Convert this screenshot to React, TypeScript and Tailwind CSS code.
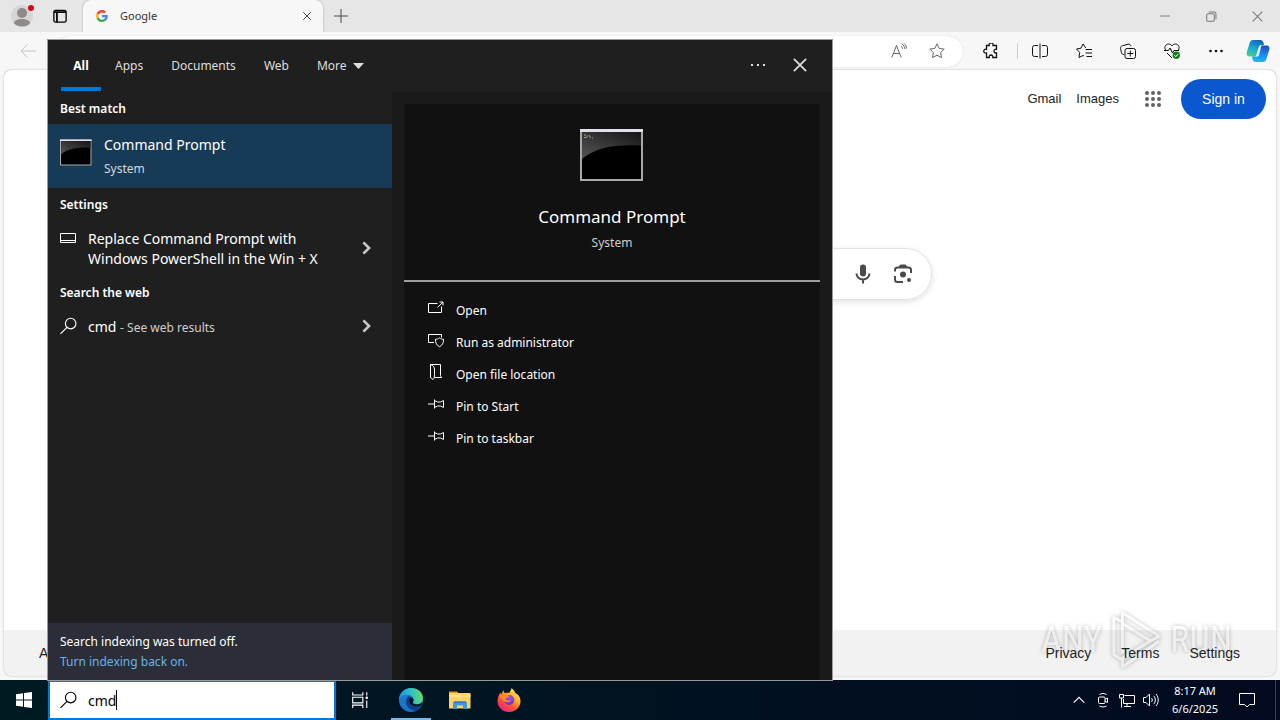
import type { ReactNode } from 'react';

const segoe = "font-['Noto_Sans','Open_Sans',sans-serif]";
const arial = "font-['Liberation_Sans',Arial,sans-serif]";

interface IconProps {
  size?: number;
  className?: string;
  stroke?: number;
  children: ReactNode;
}

function Icon({ size = 16, className = '', stroke = 1, children }: IconProps) {
  return (
    <svg
      width={size}
      height={size}
      viewBox="0 0 16 16"
      fill="none"
      stroke="currentColor"
      strokeWidth={stroke}
      className={`shrink-0 ${className}`}
      aria-hidden="true"
    >
      {children}
    </svg>
  );
}

function GoogleLogo() {
  return (
    <svg width="12" height="12" viewBox="0 0 48 48" className="shrink-0" aria-hidden="true">
      <path fill="#EA4335" d="M24 9.5c3.5 0 6.7 1.2 9.2 3.6l6.9-6.9C35.9 2.4 30.5 0 24 0 14.6 0 6.5 5.4 2.6 13.2l8 6.2C12.4 13.7 17.7 9.5 24 9.5z" />
      <path fill="#4285F4" d="M47 24.6c0-1.6-.2-3.1-.4-4.6H24v9h12.9c-.6 3-2.200 5.500-4.800 7.200l7.700 6C44.400 38 47 32 47 24.600z" />
      <path fill="#FBBC05" d="M10.500 28.600c-.5-1.500-.8-3-.8-4.600s.3-3.100.8-4.600l-8-6.200C.9 16.500 0 20.100 0 24s.9 7.500 2.600 10.800l7.900-6.200z" />
      <path fill="#34A853" d="M24 48c6.500 0 11.900-2.100 15.900-5.800l-7.700-6c-2.200 1.500-4.900 2.300-8.200 2.300-6.300 0-11.600-4.200-13.500-9.900l-8 6.200C6.500 42.600 14.600 48 24 48z" />
    </svg>
  );
}

function CopilotLogo() {
  return (
    <svg width="24" height="24" viewBox="0 0 24 24" aria-hidden="true">
      <defs>
        <linearGradient id="cp-left" x1="0.6" y1="0" x2="0.2" y2="1">
          <stop offset="0" stopColor="#1467b8" />
          <stop offset="0.5" stopColor="#18a9d6" />
          <stop offset="1" stopColor="#4fd08c" />
        </linearGradient>
        <linearGradient id="cp-right" x1="0.6" y1="0" x2="0.4" y2="1">
          <stop offset="0" stopColor="#1b4fc4" />
          <stop offset="0.5" stopColor="#1e84ea" />
          <stop offset="1" stopColor="#27b8f2" />
        </linearGradient>
      </defs>
      <path d="M7.500 1h7c1.600 0 2.400.9 2.900 2.500l.7 2.500h-2.500c-1.500 0-2.300.8-2.800 2.300L10.500 16c-.5 1.500-1.300 1.500-2.500 1.500H3.500C1 17.500 0 15.700.8 13L3.800 3.500C4.400 1.800 5.500 1 7.500 1z" fill="url(#cp-left)" />
      <path d="M16.500 23h-7c-1.600 0-2.400-.9-2.900-2.500L6 17.500h2.400c1.500 0 2.300-.8 2.800-2.300L13.500 8c.5-1.500 1.300-1.500 2.500-1.500h4.500c2.500 0 3.500 1.800 2.700 4.500l-3 9.500c-.6 1.700-1.700 2.500-3.700 2.500z" fill="url(#cp-right)" />
      <path d="M10.600 15.500L13 8.300c.3-.9.700-1.400 1.200-1.800h1.200l-2.200 8.700c-.4 1.500-1.200 2.300-2.600 2.300H9.500c.5-.4.800-1 1.100-2z" fill="#eef7ff" />
    </svg>
  );
}

function EdgeLogo() {
  return (
    <svg width="26" height="26" viewBox="0 0 26 26" aria-hidden="true">
      <defs>
        <linearGradient id="edge-top" x1="0" y1="0.5" x2="1" y2="0.4">
          <stop offset="0" stopColor="#1a8fdc" />
          <stop offset="0.5" stopColor="#2cc0c8" />
          <stop offset="1" stopColor="#68dc60" />
        </linearGradient>
        <linearGradient id="edge-low" x1="0" y1="0" x2="0.6" y2="1">
          <stop offset="0" stopColor="#1b7fd0" />
          <stop offset="1" stopColor="#1a6fc4" />
        </linearGradient>
      </defs>
      <circle cx="13" cy="13" r="12" fill="url(#edge-low)" />
      <path d="M1 13C1 6 6.500 1 13 1c7 0 12 4.600 12 10.200 0 3.800-2.900 6-6.200 6-2.800 0-4.200-1-4.200-1.900 0-.8 1.100-1.200 1.100-3 0-2.400-2.400-4.600-5.700-4.600C5.500 7.700 2 9.500 1 13z" fill="url(#edge-top)" />
      <path d="M10.500 9.600c-3 2.400-3.300 7.200-.6 10.500 1.900 2.400 4.800 3.700 7.900 3.900A12 12 0 0 0 23.600 18.500c-1.300.7-3 1.100-4.900 1.100-4.500 0-7.700-2.600-7.700-6 0-1.600.6-2.700 1.500-3.600-.6-.3-1.300-.4-2-.4z" fill="#123f8c" />
      <path d="M11 13.600c0-1.400.5-2.500 1.300-3.300 1.900.5 3.400 1.500 3.400 3 0 1-.9 1.500-.9 2.200 0 1 1.600 1.900 4 1.900 2.100 0 4.300-.7 5.500-2.600-.2 1.300-.4 2.400-.8 3.500-1.300.9-3 1.300-4.800 1.300-4.500 0-7.700-2.600-7.700-6z" fill="#03161f" />
    </svg>
  );
}

function FolderLogo() {
  return (
    <svg width="24" height="24" viewBox="0 0 24 24" aria-hidden="true">
      <path d="M1 3.500h8l2 2h-10z" fill="#e8981c" />
      <path d="M1 5h21.500v15.500H1z" fill="#fcd364" />
      <path d="M1 7h21.500v2H1z" fill="#ffe08a" />
      <path d="M5 21v-5.500a2 2 0 0 1 2-2h10a2 2 0 0 1 2 2V21h-4v-3.500H9V21z" fill="#3c9be0" />
      <path d="M6 13.500h12v1.500H6z" fill="#2a78bd" />
    </svg>
  );
}

function FirefoxLogo() {
  return (
    <svg width="26" height="26" viewBox="0 0 26 26" aria-hidden="true">
      <defs>
        <linearGradient id="ff-body" x1="0.85" y1="0.05" x2="0.2" y2="0.95">
          <stop offset="0" stopColor="#fff14f" />
          <stop offset="0.35" stopColor="#ffad25" />
          <stop offset="0.65" stopColor="#ff5637" />
          <stop offset="1" stopColor="#e9217c" />
        </linearGradient>
        <radialGradient id="ff-globe" cx="0.6" cy="0.3" r="0.8">
          <stop offset="0" stopColor="#a14bf5" />
          <stop offset="1" stopColor="#5237b8" />
        </radialGradient>
      </defs>
      <path d="M15.500 1c2 1.500 3.300 3.300 3.800 5 2.700 1.200 5.200 4 5.200 8.200C24.500 20.300 19.400 25 13 25S1.500 20.300 1.500 14c0-3.500 1.300-6.500 3-8.600L5 7.500C6 6 6.800 4.700 7.200 3.200l1.600 3.100c1.200-.4 2.800-.6 4.200-.3 1.100-1.200 2.200-2.800 2.500-5z" fill="url(#ff-body)" />
      <circle cx="13.300" cy="13" r="5" fill="url(#ff-globe)" />
      <path d="M4 10c2-3.500 5.500-3 8-1.500l1.200 1.200c-.3 1-2.600.9-3.200 1.800-.4.700.2 1.400 1 1.700 1.600.6 2.300-.4 3.600.1-.4 1.300-2.200 2.200-4 1.900C7.500 14.700 6 12 4 10z" fill="#ff8a2b" />
    </svg>
  );
}

function ConsoleThumb({ large = false }: { large?: boolean }) {
  return (
    <svg width={large ? 64 : 32} height={large ? 54 : 27} viewBox="0 0 64 54" className="shrink-0" aria-hidden="true">
      <defs>
        <linearGradient id="console-shine" x1="0" y1="1" x2="1" y2="0">
          <stop offset="0" stopColor="#555" />
          <stop offset="1" stopColor="#151515" />
        </linearGradient>
      </defs>
      <rect x="0" y="1" width="63" height="52" fill="#a8a8a8" />
      <rect x="0" y="1" width="63" height="3" fill="#e4e0ea" />
      <rect x="2" y="4" width="59" height="47" fill="#000" />
      <path d="M2 4h59v13.500C35 16 14 20 2 31z" fill="url(#console-shine)" />
      {large && <path d="M4 7h2M4 9.500h2M7 7.500v2M9 7l1.500 3M12 10h1" stroke="#bbb" strokeWidth="0.8" />}
    </svg>
  );
}

const SearchGlyph = () => (
  <Icon size={18}>
    <circle cx="9.500" cy="5.800" r="4.700" />
    <path d="M6.200 9.200L.4 15" />
  </Icon>
);

const Pin = () => (
  <Icon>
    <path d="M0 8h6.500M6.500 3.500v9M6.500 4.500l3 1.500h3l3-1.500v7l-3-1.500h-3l-3 1.500" />
  </Icon>
);

const Chevron = () => (
  <Icon size={14} stroke={3} className="text-[#c8c8c8]">
    <path d="M5 1.500L11.500 8 5 14.500" />
  </Icon>
);

const actions = [
  { label: 'Open', icon: <Icon><path d="M9.500 3.500h-9v9h13v-6M9.500 7.500l5.500-5.500M11.500 2h3.500v3.500" /></Icon> },
  { label: 'Run as administrator', icon: <Icon><path d="M6 10.500H.5v-8h13v3M11.500 6c1.200.9 2.500 1.200 4 1.200 0 4-1 6-4 7.500-3-1.500-4-3.500-4-7.500 1.500 0 2.800-.3 4-1.200z" /></Icon> },
  { label: 'Open file location', icon: <Icon><path d="M6.500 13.500h7l-1-2V.5h-10M2.500.5v13l2.500 2c1.500-1 1.500-3 1.500-5V6c0-3-1.500-5-4-5.500z" /></Icon> },
  { label: 'Pin to Start', icon: <Pin /> },
  { label: 'Pin to taskbar', icon: <Pin /> },
];

const toolbar = [
  { label: 'Split screen', icon: <Icon><path d="M6 2.500H2.500a2 2 0 0 0-2 2v7a2 2 0 0 0 2 2H6M8 .5v15M10 2.500h3.500a2 2 0 0 1 2 2v7a2 2 0 0 1-2 2H10" /></Icon> },
  { label: 'Favorites', icon: <Icon><path d="M9.800 5L7 1 5 5.200.5 6l3.200 3.400L3 14.500l4-2 1 .5M9.500 6.500h6.500M9.500 10H16M10.500 13.500H16" /></Icon> },
  { label: 'Collections', icon: <Icon><path d="M4 11.500c-1.500 0-2.300-.8-2.600-2L.6 5.500c-.3-1.500.4-2.400 1.800-2.700L8 1.200c1.500-.3 2.500.3 3 2M7 5.500h6.500a2 2 0 0 1 2 2v6a2 2 0 0 1-2 2H7a2 2 0 0 1-2-2v-6a2 2 0 0 1 2-2zM10.300 7.500v6M7.300 10.500h6" /></Icon> },
  {
    label: 'Browser essentials',
    icon: (
      <Icon>
        <path d="M1.500 7C-.2 3.500 2 1 4.500 1 6.500 1 7.500 2 8 3c.5-1 1.500-2 3.500-2 2.500 0 4.700 2.500 3 6M0 7.500h4.500L6 5l2.500 5L10 7.500h5M3 10l5 5" />
        <circle cx="12.300" cy="12.300" r="3.700" fill="#16801f" stroke="none" />
        <path d="M10.500 12.300l1.300 1.300 2.300-2.500" stroke="#fff" />
      </Icon>
    ),
  },
  {
    label: 'Settings and more',
    icon: <Icon><g fill="currentColor" stroke="none"><circle cx="2.500" cy="8" r="1.300" /><circle cx="8" cy="8" r="1.300" /><circle cx="13.500" cy="8" r="1.300" /></g></Icon>,
  },
];

const filters = ['Apps', 'Documents', 'Web'];

function TabStrip() {
  return (
    <div className="flex h-8 items-end bg-[#e6e6e6]">
      <button aria-label="Profile" className="flex h-8 w-11 items-center justify-center">
        <svg width="26" height="26" viewBox="0 0 26 26" aria-hidden="true">
          <circle cx="13" cy="13" r="11" fill="#d8d6d4" />
          <circle cx="13" cy="10" r="5" fill="#8d8a88" />
          <path d="M5 20.500c0-3 3.500-4.500 8-4.500s8 1.500 8 4.500c-2 2-5 3-8 3s-6-1-8-3z" fill="#8d8a88" />
          <circle cx="22" cy="5" r="3" fill="#d00b1c" />
        </svg>
      </button>
      <button aria-label="Tab actions" className="flex h-8 w-8 items-center justify-center text-black">
        <Icon size={14} stroke={1.500}>
          <rect x="1" y="1.500" width="14" height="13.500" rx="2" />
          <path d="M1 3.500h14M4.500 3v12" strokeWidth="2" />
        </Icon>
      </button>
      <div className="ml-[7px] flex h-8 w-60 items-center rounded-t-lg bg-[#f7f7f7] pr-2 pl-[13px] shadow-[0_0_2px_#999]">
        <GoogleLogo />
        <span className={`ml-3 flex-1 text-[11px] text-[#333] ${segoe}`}>Google</span>
        <button aria-label="Close tab" className="flex h-4 w-4 items-center justify-center text-[#333]">
          <Icon size={10} stroke={1.500}><path d="M2 2l12 12M14 2L2 14" /></Icon>
        </button>
      </div>
      <button aria-label="New tab" className="flex h-8 w-9 items-center justify-center text-[#333]">
        <Icon size={14}><path d="M8 0v16M0 8h16" /></Icon>
      </button>
      <div className="ml-auto flex text-[#777]">
        <button aria-label="Minimize" className="flex h-8 w-[46px] items-center justify-center">
          <Icon size={10} stroke={1.500}><path d="M0 8h16" /></Icon>
        </button>
        <button aria-label="Restore" className="flex h-8 w-[46px] items-center justify-center">
          <Icon size={11} stroke={1.500}><rect x="1" y="4" width="11" height="11" rx="2" /><path d="M4 1.500h8a2.500 2.500 0 0 1 2.500 2.500v8" /></Icon>
        </button>
        <button aria-label="Close" className="flex h-8 w-[46px] items-center justify-center">
          <Icon size={11} stroke={1.500}><path d="M1 1l14 14M15 1L1 15" /></Icon>
        </button>
      </div>
    </div>
  );
}

function Toolbar() {
  return (
    <div className="flex h-[38px] items-center bg-[#f7f7f7] pr-0.5 text-[#111]">
      <button aria-label="Back" className="flex h-8 w-14 items-center justify-center text-[#c4c4c4]">
        <Icon><path d="M16 8H1M7.500 1.500L1 8l6.500 6.500" /></Icon>
      </button>
      <div className="flex h-[31px] flex-1 items-center rounded-full bg-white pr-2 pl-4 text-[#666] shadow-[0_0_1px_#bbb]">
        <input aria-label="Address" className="min-w-0 flex-1 bg-transparent text-sm outline-none" />
        <button aria-label="Read aloud" className="flex w-10 justify-center">
          <Icon><path d="M.8 14.500L5.500 2.500l4.700 12M2.500 10.500h6M10 3c1 .8 1.500 1.800 1.500 3M10.500.8c2 1 3.300 3 3.300 5.200M13 .5c1.500 1.300 2.500 3 2.500 5" /></Icon>
        </button>
        <button aria-label="Add to favorites" className="flex w-9 justify-center">
          <Icon><path d="M8 .8l2.200 4.600 5 .7-3.600 3.500.9 5L8 12.200l-4.500 2.400.9-5L.8 6.100l5-.7z" /></Icon>
        </button>
      </div>
      <button aria-label="Extensions" className="ml-1.5 flex h-8 w-11 items-center justify-center">
        <Icon stroke={1.300}><path d="M4 2.500h2.200a2 2 0 1 1 3.800 0h3.500v3.800a1.900 1.900 0 1 0 0 3.600v4.600h-3.700a1.900 1.900 0 1 0-3.600 0H3.500V10a2 2 0 1 1 0-3.700V2.500z" /></Icon>
      </button>
      <span className="ml-1 h-4 w-px bg-[#ccc]" />
      {toolbar.map((item) => (
        <button key={item.label} aria-label={item.label} className="flex h-8 w-11 items-center justify-center">
          {item.icon}
        </button>
      ))}
      <button aria-label="Copilot" className="flex h-8 w-10 items-center justify-center">
        <CopilotLogo />
      </button>
    </div>
  );
}

function Watermark() {
  return (
    <div className="absolute right-11 bottom-1 flex h-16 items-center gap-1.5 text-[36px] text-white/90 [filter:drop-shadow(0_0_2px_rgba(0,0,0,0.3))] font-['Roboto_Condensed','Open_Sans_Condensed',sans-serif]">
      <span>ANY</span>
      <svg width="56" height="62" viewBox="0 0 58 62" fill="none" stroke="currentColor" strokeWidth="3" strokeLinejoin="round" aria-hidden="true">
        <path d="M15 12L6 8v38l9 6M15 3l38 24-9 5-29-18zM15 3v42M44 32L15 50v9l38-27" />
      </svg>
      <span>RUN</span>
    </div>
  );
}

function GooglePage() {
  return (
    <div className={`relative mx-1 mb-1 flex flex-1 flex-col overflow-hidden rounded-lg bg-white text-[#222] shadow-[0_0_2px_#aaa] ${arial}`}>
      <header className="flex items-center justify-end pt-[9px] pr-2.5 text-[13px]">
        <a href="#gmail">Gmail</a>
        <a href="#images" className="ml-[15px]">Images</a>
        <button aria-label="Google apps" className="mr-4 ml-[22px] flex h-10 w-6 items-center justify-center text-[#5f6368]">
          <Icon>
            <g fill="currentColor" stroke="none">
              {[2, 8, 14].map((y) => [2, 8, 14].map((x) => <circle key={`${x}-${y}`} cx={x} cy={y} r="2" />))}
            </g>
          </Icon>
        </button>
        <button className="h-10 w-[85px] rounded-full bg-[#0b57d0] text-[14px] text-white">Sign in</button>
      </header>
      <div className="mx-auto mt-[129px] flex h-[52px] w-full max-w-[584px] items-center rounded-full border border-[#dfe1e5] pr-2 pl-5 text-[#4a4a4a] shadow-[0_2px_6px_rgba(0,0,0,0.12)]">
        <input aria-label="Search Google" className="min-w-0 flex-1 outline-none" />
        <button aria-label="Search by voice" className="flex w-10 justify-center">
          <svg width="20" height="20" viewBox="0 0 20 20" fill="none" stroke="currentColor" strokeWidth="2" aria-hidden="true">
            <rect x="7" y="0.500" width="6" height="12" rx="3" fill="currentColor" stroke="none" />
            <path d="M3.500 9.500c0 3.500 3 6 6.500 6s6.500-2.500 6.500-6M10 15.500v4" />
          </svg>
        </button>
        <button aria-label="Search by image" className="flex w-10 justify-center">
          <svg width="20" height="20" viewBox="0 0 20 20" fill="none" stroke="currentColor" strokeWidth="2" aria-hidden="true">
            <path d="M2 7.500V6a2.500 2.500 0 0 1 2.500-2.500h11A2.500 2.500 0 0 1 18 6v3M2 12v3.500A2.500 2.500 0 0 0 4.500 18H10M6.500 3L8 1.500h4L13.500 3" />
            <circle cx="10" cy="10.500" r="3" fill="currentColor" stroke="none" />
            <circle cx="16" cy="16" r="2" fill="currentColor" stroke="none" />
          </svg>
        </button>
      </div>
      <Watermark />
      <footer className="relative mt-auto flex h-[46px] items-center pr-9 pl-[35px] text-[14px]">
        <span className="absolute inset-0 bg-black/5" />
        <a href="#about" className="relative">About</a>
        <nav className="relative ml-auto flex gap-[30px]">
          <a href="#privacy">Privacy</a>
          <a href="#terms">Terms</a>
          <a href="#settings">Settings</a>
        </nav>
      </footer>
    </div>
  );
}

function GroupLabel({ children }: { children: ReactNode }) {
  return <h2 className="flex h-8 items-center px-3 pt-0.5 text-[12px] font-semibold">{children}</h2>;
}

function SearchPanel() {
  return (
    <section aria-label="Search" className={`absolute top-10 bottom-0 left-12 flex w-[784px] flex-col bg-[#1f1f1f] text-white shadow-[0_0_0_1px_#9a9a9a] ${segoe}`}>
      <header className="flex h-[52px] shrink-0 items-stretch pr-2.5 pb-0.5 pl-[13px] text-[12px] text-[#dedede]">
        <button className="relative w-10 pt-0.5 font-bold text-white">
          All
          <span className="absolute inset-x-0 -bottom-px h-1 bg-[#0078d4]" />
        </button>
        {filters.map((name) => (
          <button key={name} className="px-3.5 pt-0.5">{name}</button>
        ))}
        <button className="flex items-center gap-1.5 px-3.5 pt-0.5">
          More
          <svg width="11" height="6" viewBox="0 0 11 6" fill="currentColor" aria-hidden="true"><path d="M0 0h11L5.500 6z" /></svg>
        </button>
        <button aria-label="Options" className="ml-auto flex w-10 items-center justify-center">
          <Icon><g fill="currentColor" stroke="none"><rect x="1" y="7" width="2" height="2" /><rect x="7" y="7" width="2" height="2" /><rect x="13" y="7" width="2" height="2" /></g></Icon>
        </button>
        <button aria-label="Close search" className="flex w-11 items-center justify-center">
          <Icon size={14} stroke={2}><path d="M1 1l14 14M15 1L1 15" /></Icon>
        </button>
      </header>
      <div className="flex min-h-0 flex-1">
        <div className="flex w-[344px] flex-col">
          <GroupLabel>Best match</GroupLabel>
          <button className="flex h-16 items-center bg-[#173a56] px-3 text-left">
            <span className="-mt-2"><ConsoleThumb /></span>
            <span className="ml-3 flex flex-col pt-0.5">
              <span className="text-[14px] leading-6">Command Prompt</span>
              <span className="text-[12px] leading-6 text-[#cfd8df]">System</span>
            </span>
          </button>
          <GroupLabel>Settings</GroupLabel>
          <button className="flex h-14 items-center pr-[19px] pl-3 text-left">
            <Icon className="-mt-5"><path d="M.5 3.500h15v9H.5zM.5 10.500h15" /></Icon>
            <span className="ml-3 flex-1 pt-0.5 text-[14px] leading-5">Replace Command Prompt with<br />Windows PowerShell in the Win + X</span>
            <Chevron />
          </button>
          <GroupLabel>Search the web</GroupLabel>
          <button className="flex h-9 items-center pr-[19px] pl-3 text-left">
            <SearchGlyph />
            <span className="ml-2.5 flex-1 text-[14px]">
              cmd <span className="text-[12px] text-[#cfcfcf]">- See web results</span>
            </span>
            <Chevron />
          </button>
          <div className="mt-auto h-[57px] bg-[#2b2e38] px-3 pt-[9px] text-[12px] leading-5">
            <p>Search indexing was turned off.</p>
            <a href="#indexing" className="text-[#6cb2e6]">Turn indexing back on.</a>
          </div>
        </div>
        <div className="flex flex-1 bg-[#1a1a1a] px-3 pt-3">
          <div className="flex flex-1 flex-col bg-[#111]">
            <div className="flex h-[178px] flex-col items-center border-b-2 border-[#9e9e9e] pt-6">
              <ConsoleThumb large />
              <h1 className="mt-[23px] text-[17px] leading-6">Command Prompt</h1>
              <p className="mt-0.5 text-[12px] leading-6 text-[#cfcfcf]">System</p>
            </div>
            <div className="flex flex-col pt-[13px]">
              {actions.map((action) => (
                <button key={action.label} className="flex h-8 items-center gap-3 px-6 text-[12px]">
                  <span className="-mt-1.5">{action.icon}</span>
                  {action.label}
                </button>
              ))}
            </div>
          </div>
        </div>
      </div>
    </section>
  );
}

function Taskbar() {
  return (
    <div className={`flex h-10 shrink-0 items-stretch bg-gradient-to-r from-[#001a22] to-[#020a20] text-white ${segoe}`}>
      <button aria-label="Start" className="flex w-12 items-center justify-center">
        <Icon><path d="M0 2.300l7-1v6.200H0zM8 1.100L16 0v7.500H8zM0 8.500h7v6.200l-7-1zM8 8.500h8V16l-8-1.100z" fill="currentColor" stroke="none" /></Icon>
      </button>
      <label className="flex w-72 items-center border-2 border-[#0078d7] bg-white pl-2.5 text-black">
        <SearchGlyph />
        <input aria-label="Type here to search" defaultValue="cmd" className="ml-2.5 field-sizing-content text-[14px] caret-transparent outline-none" />
        <span className="h-5 w-px bg-black" />
      </label>
      <button aria-label="Task view" className="flex w-12 items-center justify-center">
        <Icon size={18}><path d="M1.500 1v2.500h9V1M1.500 5.500h9v5h-9zM1.500 15v-2.500h9V15M14 1v3M14 8.500V15" /><rect x="13" y="5" width="2" height="2" fill="currentColor" stroke="none" /></Icon>
      </button>
      <div className="ml-[3px] flex gap-px">
        <button aria-label="Microsoft Edge" className="relative flex w-12 items-center justify-center">
          <EdgeLogo />
          <span className="absolute inset-x-1 bottom-0 h-0.5 bg-[#76b9ed]" />
        </button>
        <button aria-label="File Explorer" className="flex w-12 items-center justify-center"><FolderLogo /></button>
        <button aria-label="Firefox" className="flex w-12 items-center justify-center"><FirefoxLogo /></button>
      </div>
      <div className="ml-auto flex items-stretch">
        <button aria-label="Show hidden icons" className="flex w-6 items-center justify-center">
          <Icon size={12}><path d="M1 11.500L8 4.500l7 7" strokeWidth="1.500" /></Icon>
        </button>
        <button aria-label="Meet now" className="flex w-6 items-center justify-center">
          <Icon><rect x="3.500" y="5" width="6.500" height="6.500" rx="1" /><path d="M10 7.500l2.500-1.500v4.500L10 9M4.500 2.500c2-1.300 5-1.300 7 0M4.500 14c2 1.300 5 1.300 7 0" /></Icon>
        </button>
        <button aria-label="Network" className="flex w-6 items-center justify-center">
          <Icon><path d="M5.500 3.500h10v8h-11V7M8 11.500v3M5 14.500h7M.5 2.500h4V6h-4zM2.500 6v9.500" /></Icon>
        </button>
        <button aria-label="Volume" className="flex w-6 items-center justify-center">
          <Icon><path d="M.5 5.500H3l3.500-3.500v12L3 10.500H.5zM8.500 6c1 1.200 1 2.800 0 4M10.800 4c2 2.300 2 5.700 0 8M13 2c3 3.500 3 8.500 0 12" /></Icon>
        </button>
        <button className="w-16 text-center text-[11px] leading-[18px]">
          8:17 AM<br />6/6/2025
        </button>
        <button aria-label="Notifications" className="mr-2 flex w-10 items-center justify-center">
          <Icon><path d="M.5 1.500h15v11h-5L8 15l-2.500-2.500h-5z" /></Icon>
        </button>
        <button aria-label="Show desktop" className="w-[5px] border-l border-[#3a4452]" />
      </div>
    </div>
  );
}

export default function App() {
  return (
    <div className="flex h-screen flex-col overflow-hidden">
      <main className="relative flex min-h-0 flex-1 flex-col bg-[#f7f7f7]">
        <TabStrip />
        <Toolbar />
        <GooglePage />
        <SearchPanel />
      </main>
      <Taskbar />
    </div>
  );
}
